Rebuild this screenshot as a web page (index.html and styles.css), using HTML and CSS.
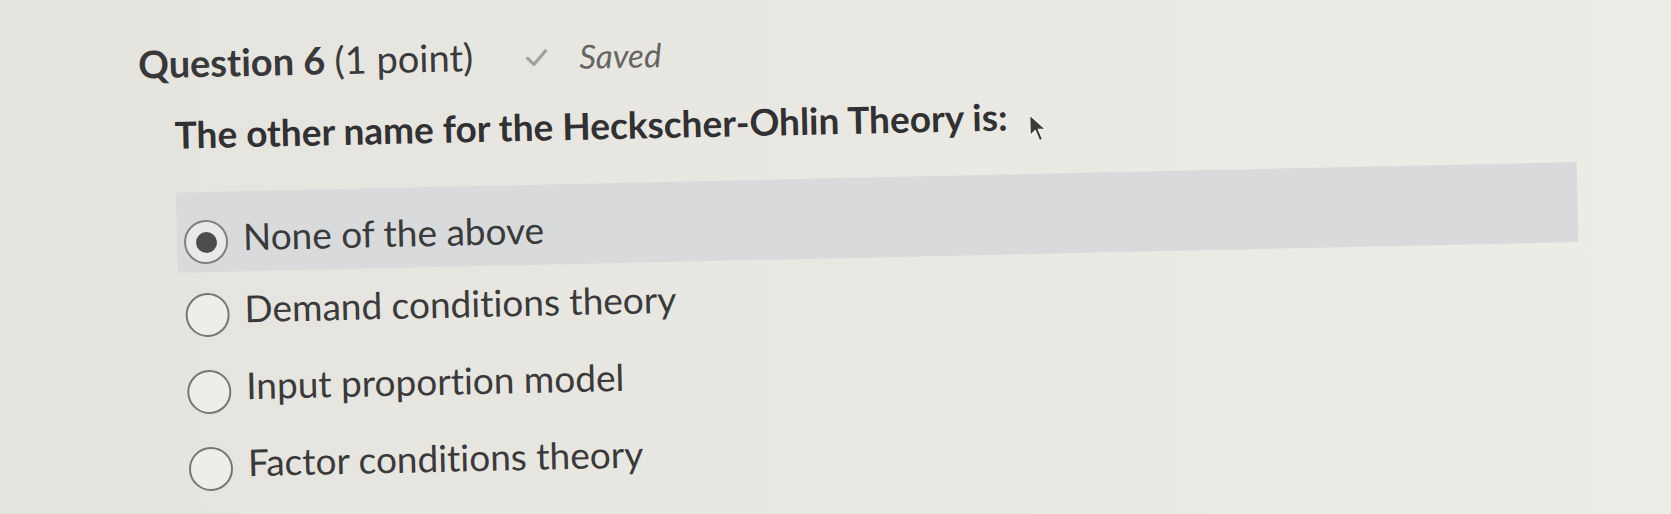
FILE: index.html
```html
<!DOCTYPE html>
<html lang="en">
<head>
<meta charset="utf-8">
<title>Question 6</title>
<link rel="stylesheet" href="styles.css">
</head>
<body>
<main class="page">
  <header class="q-header">
    <h2 class="q-title">Question 6 <span class="q-points">(1 point)</span></h2>
    <span class="q-status">
      <svg class="check" viewBox="0 0 24 19" width="23" height="18" aria-hidden="true">
        <path d="M2.5 10 L9 16.5 L21.5 2.5" fill="none" stroke="#a2a19d" stroke-width="3.4" stroke-linecap="round" stroke-linejoin="round"/>
      </svg>
      <span class="saved">Saved</span>
    </span>
  </header>
  <div class="q-text">
    <span>The other name for the Heckscher-Ohlin Theory is:</span>
    <svg class="cursor" viewBox="0 0 20 30" width="21" height="31" aria-hidden="true">
      <path d="M2 2 L2 22 L7 17 L11 27 L14 26 L10 16 L17 16 Z" fill="#3b3b3c" stroke="#f4f4f0" stroke-width="1.2" stroke-linejoin="round"/>
    </svg>
  </div>
  <ul class="options">
    <li class="option selected"><span class="radio checked"></span><span class="label">None of the above</span></li>
    <li class="option"><span class="radio"></span><span class="label">Demand conditions theory</span></li>
    <li class="option"><span class="radio"></span><span class="label">Input proportion model</span></li>
    <li class="option"><span class="radio"></span><span class="label">Factor conditions theory</span></li>
  </ul>
</main>
</body>
</html>
```

FILE: styles.css
```css
* { box-sizing: border-box; }
html, body { margin: 0; height: 100%; }
body {
  background: linear-gradient(to right, #e5e3dd 0%, #e9e7e1 45%, #eeece7 100%);
  font-family: Lato, "Open Sans", sans-serif;
  font-variant-ligatures: none;
  font-feature-settings: "liga" 0, "clig" 0;
  color: #333;
  overflow: hidden;
}
.page {
  padding: 39px 0 0 142px;
  transform: rotate(-1.25deg);
  transform-origin: 206px 240px;
}
.q-header {
  display: flex;
  align-items: baseline;
  gap: 52px;
}
.q-title {
  margin: 0;
  font-size: 38px;
  font-weight: 700;
  color: #38383a;
  line-height: 46px;
}
.q-points { font-weight: 400; color: #3a3a3c; }
.q-status {
  display: flex;
  align-items: baseline;
  gap: 31px;
  color: #646462;
}
.check {
  align-self: flex-start;
  margin-top: 15px;
}
.saved {
  font-style: italic;
  font-size: 33px;
  line-height: 46px;
}
.q-text {
  display: flex;
  align-items: flex-start;
  gap: 20px;
  height: 46px;
  margin: 24px 0 0 35px;
  font-size: 37px;
  font-weight: 700;
  color: #313133;
  line-height: 46px;
}
.cursor {
  margin-top: 20px;
  margin-bottom: -10px;
}
.options {
  list-style: none;
  margin: 35px 0 0 35px;
  padding: 0;
  width: 1401px;
}
.option {
  display: flex;
  align-items: center;
  gap: 15px;
  height: 77px;
  padding-left: 7px;
  font-size: 37px;
  color: #3a3a3a;
}
.option.selected {
  background: #d8dadb;
  height: 80px;
  padding-top: 20px;
  margin-bottom: 4px;
}
.label { margin-bottom: 12px; }
.radio {
  flex: none;
  width: 44px;
  height: 44px;
  border-radius: 50%;
  border: 2px solid #777776;
  background: #eeede9;
  display: flex;
  align-items: center;
  justify-content: center;
}
.radio.checked {
  background: #e9e9e8;
  border-color: #808080;
}
.radio.checked::after {
  content: "";
  width: 21px;
  height: 21px;
  border-radius: 50%;
  background: #4c4c4d;
}
```
